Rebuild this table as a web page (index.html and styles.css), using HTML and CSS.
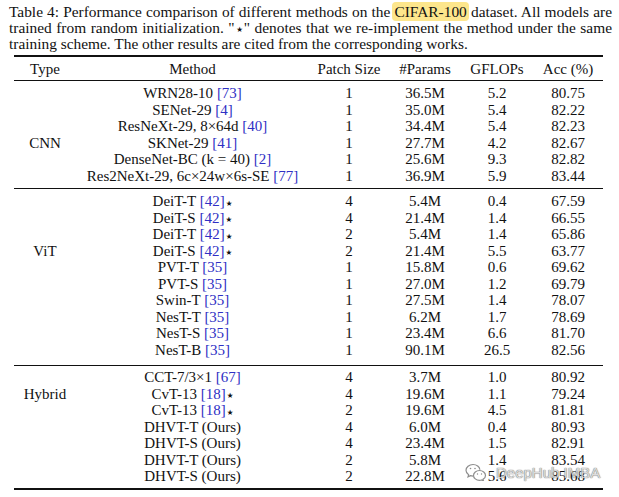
FILE: index.html
```html
<!DOCTYPE html>
<html>
<head>
<meta charset="utf-8">
<link rel="stylesheet" href="styles.css">
</head>
<body>
<div class="page">
  <div class="caption">
    <div class="line just">Table 4: Performance comparison of different methods on the <span class="hl">CIFAR-100</span> dataset. All models are</div>
    <div class="line just">trained from random initialization. "<span class="star">★</span>" denotes that we re-implement the method under the same</div>
    <div class="line">training scheme. The other results are cited from the corresponding works.</div>
  </div>
  <table class="results">
    <colgroup>
      <col class="c-type"><col class="c-method"><col class="c-patch"><col class="c-params"><col class="c-flops"><col class="c-acc">
    </colgroup>
    <thead>
      <tr><th>Type</th><th>Method</th><th>Patch Size</th><th>#Params</th><th>GFLOPs</th><th>Acc (%)</th></tr>
    </thead>
    <tbody class="grp cnn">
      <tr><td></td><td>WRN28-10 <a class="cite">[73]</a></td><td>1</td><td>36.5M</td><td>5.2</td><td>80.75</td></tr>
      <tr><td></td><td>SENet-29 <a class="cite">[4]</a></td><td>1</td><td>35.0M</td><td>5.4</td><td>82.22</td></tr>
      <tr><td></td><td>ResNeXt-29, 8×64d <a class="cite">[40]</a></td><td>1</td><td>34.4M</td><td>5.4</td><td>82.23</td></tr>
      <tr><td>CNN</td><td>SKNet-29 <a class="cite">[41]</a></td><td>1</td><td>27.7M</td><td>4.2</td><td>82.67</td></tr>
      <tr><td></td><td>DenseNet-BC (k = 40) <a class="cite">[2]</a></td><td>1</td><td>25.6M</td><td>9.3</td><td>82.82</td></tr>
      <tr><td></td><td>Res2NeXt-29, 6c×24w×6s-SE <a class="cite">[77]</a></td><td>1</td><td>36.9M</td><td>5.9</td><td>83.44</td></tr>
    </tbody>
    <tbody class="grp vit">
      <tr><td></td><td>DeiT-T <a class="cite">[42]</a><span class="star">★</span></td><td>4</td><td>5.4M</td><td>0.4</td><td>67.59</td></tr>
      <tr><td></td><td>DeiT-S <a class="cite">[42]</a><span class="star">★</span></td><td>4</td><td>21.4M</td><td>1.4</td><td>66.55</td></tr>
      <tr><td></td><td>DeiT-T <a class="cite">[42]</a><span class="star">★</span></td><td>2</td><td>5.4M</td><td>1.4</td><td>65.86</td></tr>
      <tr><td>ViT</td><td>DeiT-S <a class="cite">[42]</a><span class="star">★</span></td><td>2</td><td>21.4M</td><td>5.5</td><td>63.77</td></tr>
      <tr><td></td><td>PVT-T <a class="cite">[35]</a></td><td>1</td><td>15.8M</td><td>0.6</td><td>69.62</td></tr>
      <tr><td></td><td>PVT-S <a class="cite">[35]</a></td><td>1</td><td>27.0M</td><td>1.2</td><td>69.79</td></tr>
      <tr><td></td><td>Swin-T <a class="cite">[35]</a></td><td>1</td><td>27.5M</td><td>1.4</td><td>78.07</td></tr>
      <tr><td></td><td>NesT-T <a class="cite">[35]</a></td><td>1</td><td>6.2M</td><td>1.7</td><td>78.69</td></tr>
      <tr><td></td><td>NesT-S <a class="cite">[35]</a></td><td>1</td><td>23.4M</td><td>6.6</td><td>81.70</td></tr>
      <tr><td></td><td>NesT-B <a class="cite">[35]</a></td><td>1</td><td>90.1M</td><td>26.5</td><td>82.56</td></tr>
    </tbody>
    <tbody class="grp hybrid">
      <tr><td></td><td>CCT-7/3×1 <a class="cite">[67]</a></td><td>4</td><td>3.7M</td><td>1.0</td><td>80.92</td></tr>
      <tr><td>Hybrid</td><td>CvT-13 <a class="cite">[18]</a><span class="star">★</span></td><td>4</td><td>19.6M</td><td>1.1</td><td>79.24</td></tr>
      <tr><td></td><td>CvT-13 <a class="cite">[18]</a><span class="star">★</span></td><td>2</td><td>19.6M</td><td>4.5</td><td>81.81</td></tr>
      <tr><td></td><td>DHVT-T (Ours)</td><td>4</td><td>6.0M</td><td>0.4</td><td>80.93</td></tr>
      <tr><td></td><td>DHVT-S (Ours)</td><td>4</td><td>23.4M</td><td>1.5</td><td>82.91</td></tr>
      <tr><td></td><td>DHVT-T (Ours)</td><td>2</td><td>5.8M</td><td>1.4</td><td class="best">83.54</td></tr>
      <tr><td></td><td>DHVT-S (Ours)</td><td>2</td><td>22.8M</td><td>5.6</td><td class="best">85.68</td></tr>
    </tbody>
  </table>
  <div class="watermark">
    <svg class="wm-icon" width="22" height="18" viewBox="0 0 22 18">
      <path d="M8 1.5c-3.9 0-7 2.6-7 5.8 0 1.8 1 3.4 2.6 4.5l-.6 2.1 2.4-1.2c.8.2 1.7.4 2.6.4" fill="none" stroke="#7a7a7a" stroke-width="1.2"/>
      <path d="M8 1.5c3.6 0 6.6 2.3 6.9 5.2" fill="none" stroke="#7a7a7a" stroke-width="1.2"/>
      <path d="M14.5 7.5c-3.3 0-6 2.2-6 4.9s2.7 4.9 6 4.9c.7 0 1.4-.1 2-.3l2 1-.5-1.7c1.5-.9 2.5-2.3 2.5-3.9 0-2.7-2.7-4.9-6-4.9z" fill="none" stroke="#7a7a7a" stroke-width="1.2"/>
      <circle cx="5.5" cy="5.5" r=".8" fill="#7a7a7a"/><circle cx="10" cy="5.5" r=".8" fill="#7a7a7a"/>
      <circle cx="12.5" cy="11" r=".7" fill="#7a7a7a"/><circle cx="16.5" cy="11" r=".7" fill="#7a7a7a"/>
    </svg>
    <span class="wm-text">DeepHub IMBA</span>
  </div>
</div>
</body>
</html>
```

FILE: styles.css
```css
html, body {
  margin: 0;
  padding: 0;
  background: #ffffff;
}
.page {
  position: relative;
  width: 619px;
  height: 497px;
  overflow: hidden;
  font-family: "Liberation Serif", "Times New Roman", serif;
  color: #111111;
}
.caption {
  padding: 4px 7px 0 9px;
  font-size: 15.4px;
  line-height: 15.8px;
}
.line {
  white-space: nowrap;
}
.line.just {
  text-align: justify;
  text-align-last: justify;
  white-space: normal;
}
.hl {
  background: #fde68c;
  border-radius: 4px;
  padding: 1px 2px;
  margin: 0 -2px;
}
.star {
  font-family: "DejaVu Sans", sans-serif;
  font-size: 7.5px;
  line-height: 0;
  vertical-align: 0.5px;
  margin-left: 1px;
}
.results {
  margin: 4px 0 0 14px;
  width: 589px;
  border-collapse: collapse;
  table-layout: fixed;
  font-size: 15px;
  line-height: 16.5px;
  border-top: 2px solid #111;
  border-bottom: 2px solid #111;
}
.c-type { width: 62px; }
.c-method { width: 233px; }
.c-patch { width: 80px; }
.c-params { width: 72px; }
.c-flops { width: 72px; }
.c-acc { width: 70px; }
.results th,
.results td {
  padding: 0;
  text-align: center;
  white-space: nowrap;
  font-weight: normal;
}
.results th {
  padding: 3.5px 0 3px;
}
.grp {
  border-top: 1px solid #111;
}
.grp tr:first-child td {
  padding-top: 4px;
}
.grp tr:last-child td {
  padding-bottom: 4px;
}
.vit tr:last-child td {
  padding-bottom: 6.5px;
}
.hybrid tr:first-child td {
  padding-top: 3.5px;
}
.hybrid tr:last-child td {
  padding-bottom: 3.5px;
}
.cite {
  color: #2f2fc4;
  text-decoration: none;
}
.best {
  font-weight: bold;
}
.watermark {
  position: absolute;
  left: 465px;
  top: 463px;
  display: flex;
  align-items: center;
  gap: 9px;
  opacity: 0.85;
}
.wm-text {
  font-family: "Liberation Sans", Arial, sans-serif;
  font-size: 15px;
  color: #d6d6d6;
  text-shadow: 0 0 1px #666666, 0 0 1px #666666;
}
```
